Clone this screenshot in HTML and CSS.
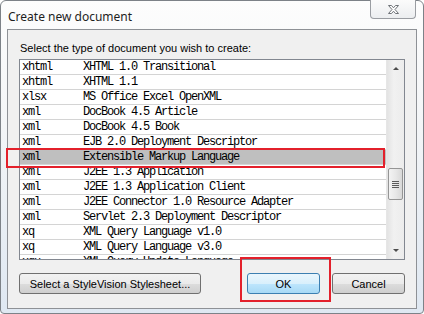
FILE: index.html
```html
<!DOCTYPE html>
<html lang="en">
<head>
    <meta charset="UTF-8">
    <meta name="viewport" content="width=device-width, initial-scale=1.0">
    <title>Create new document</title>
    <link rel="stylesheet" href="styles.css">
</head>
<body>
    <div class="window">
        <div class="titlebar">
            <span class="title">Create new document</span>
            <button class="close-btn" aria-label="Close">
                <svg width="13" height="11" viewBox="0 0 13 11">
                    <path d="M1.5 1.5h3l2 2.3 2-2.3h3l-3.5 4 3.5 4h-3l-2-2.3-2 2.3h-3l3.5-4z" fill="#fff" stroke="#6f7378" stroke-width="1" stroke-linejoin="round"/>
                </svg>
            </button>
        </div>

        <div class="client">
            <div class="label">Select the type of document you wish to create:</div>

            <div class="listbox">
                <div class="rows">
                    <div class="row"><span class="ext">xhtml</span><span>XHTML 1.0 Transitional</span></div>
                    <div class="row"><span class="ext">xhtml</span><span>XHTML 1.1</span></div>
                    <div class="row"><span class="ext">xlsx</span><span>MS Office Excel OpenXML</span></div>
                    <div class="row"><span class="ext">xml</span><span>DocBook 4.5 Article</span></div>
                    <div class="row"><span class="ext">xml</span><span>DocBook 4.5 Book</span></div>
                    <div class="row"><span class="ext">xml</span><span>EJB 2.0 Deployment Descriptor</span></div>
                    <div class="row selected"><span class="ext">xml</span><span>Extensible Markup Language</span></div>
                    <div class="row"><span class="ext">xml</span><span>J2EE 1.3 Application</span></div>
                    <div class="row"><span class="ext">xml</span><span>J2EE 1.3 Application Client</span></div>
                    <div class="row"><span class="ext">xml</span><span>J2EE Connector 1.0 Resource Adapter</span></div>
                    <div class="row"><span class="ext">xml</span><span>Servlet 2.3 Deployment Descriptor</span></div>
                    <div class="row"><span class="ext">xq</span><span>XML Query Language v1.0</span></div>
                    <div class="row"><span class="ext">xq</span><span>XML Query Language v3.0</span></div>
                    <div class="row"><span class="ext">xqu</span><span>XML Query Update Language</span></div>
                </div>
                <div class="scrollbar">
                    <div class="arrow"><span class="tri up"></span></div>
                    <div class="track">
                        <div class="thumb"><span class="grip"></span></div>
                    </div>
                    <div class="arrow"><span class="tri down"></span></div>
                </div>
            </div>

            <div class="actions">
                <button class="btn wide">Select a StyleVision Stylesheet...</button>
                <div class="right-btns">
                    <button class="btn default">OK</button>
                    <button class="btn">Cancel</button>
                </div>
            </div>
        </div>

        <div class="mark mark-row"></div>
        <div class="mark mark-ok"></div>
    </div>
</body>
</html>
```

FILE: styles.css
```css
body {
    margin: 0;
    padding: 0;
    background-color: #fff;
}

.window {
    position: relative;
    width: 424px;
    height: 314px;
    box-sizing: border-box;
    border: 1px solid #7d8288;
    border-radius: 6px 6px 4px 4px;
    background: linear-gradient(to bottom, #fdfdfd 0%, #f3f5f7 40%, #dfe8f2 100%);
    padding: 0 6px 4px 6px;
    display: flex;
    flex-direction: column;
}

.titlebar {
    height: 28px;
    display: flex;
    justify-content: space-between;
    align-items: flex-start;
}

.title {
    font-family: "Noto Sans", sans-serif;
    font-size: 12px;
    color: #1e1e1e;
    margin: 7px 0 0 1px;
}

.close-btn {
    width: 46px;
    height: 19px;
    margin: -1px 1px 0 0;
    padding: 0;
    border: 1px solid #9a9da2;
    border-top: none;
    border-radius: 0 0 4px 4px;
    background: linear-gradient(to bottom, #fbfbfb, #eceef0);
    display: flex;
    align-items: center;
    justify-content: center;
}

.client {
    flex: 1;
    border: 1px solid #8e9196;
    background-color: #f0f0f0;
    padding: 11px 11px 0 11px;
    display: flex;
    flex-direction: column;
}

.label {
    font-family: "Liberation Sans", Arial, sans-serif;
    font-size: 11px;
    line-height: 14px;
    height: 14px;
    color: #000;
    margin: 0 0 4px 1px;
}

.listbox {
    height: 201px;
    box-sizing: border-box;
    border: 1px solid #828790;
    background-color: #fff;
    display: flex;
    overflow: hidden;
}

.rows {
    flex: 1;
    overflow: hidden;
}

.row {
    height: 14px;
    border-bottom: 1px solid #d4d4d4;
    padding-left: 2px;
    display: flex;
    font-family: "Liberation Mono", "Courier New", monospace;
    font-size: 12px;
    letter-spacing: -1.2px;
    line-height: 14px;
    color: #000;
    white-space: nowrap;
}

.row .ext {
    width: 61px;
}

.row.selected {
    background-color: #bfbfbf;
}

.scrollbar {
    width: 17px;
    background: linear-gradient(to right, #e3e3e3, #f1f1f1 40%, #ececec);
    border-left: 1px solid #e6e6e6;
    display: flex;
    flex-direction: column;
}

.arrow {
    height: 17px;
    display: flex;
    align-items: center;
    justify-content: center;
}

.tri {
    width: 0;
    height: 0;
    border-left: 3px solid transparent;
    border-right: 3px solid transparent;
}

.tri.up {
    border-bottom: 3px solid #4d4d4d;
}

.tri.down {
    border-top: 3px solid #4d4d4d;
}

.track {
    flex: 1;
}

.thumb {
    width: 13px;
    height: 30px;
    margin: 91px 0 0 1px;
    border: 1px solid #959595;
    border-radius: 2px;
    background: linear-gradient(to right, #f3f3f3, #e8e8e8 50%, #d8d8d8);
    display: flex;
    align-items: center;
    justify-content: center;
}

.grip {
    width: 7px;
    height: 7px;
    background: repeating-linear-gradient(to bottom, #5a5a5a 0, #5a5a5a 1px, transparent 1px, transparent 2px);
}

.actions {
    margin-top: 13px;
    display: flex;
    justify-content: space-between;
}

.right-btns {
    display: flex;
    gap: 12px;
}

.btn {
    height: 21px;
    width: 73px;
    padding: 0;
    border: 1px solid #707070;
    border-radius: 3px;
    background: linear-gradient(to bottom, #f2f2f2 0%, #ebebeb 50%, #dddddd 51%, #cfcfcf 100%);
    font-family: "Liberation Sans", Arial, sans-serif;
    font-size: 11px;
    color: #000;
}

.btn.wide {
    width: 182px;
}

.btn.default {
    border-color: #3c7fb1;
    background: linear-gradient(to bottom, #eaf6fd 0%, #d9f0fc 50%, #bee6fd 51%, #a7d9f5 100%);
}

.mark {
    position: absolute;
    border: 2px solid #e3202b;
    box-sizing: border-box;
}

.mark-row {
    left: 5px;
    top: 147px;
    width: 379px;
    height: 20px;
}

.mark-ok {
    left: 239px;
    top: 256px;
    width: 91px;
    height: 45px;
}
```
